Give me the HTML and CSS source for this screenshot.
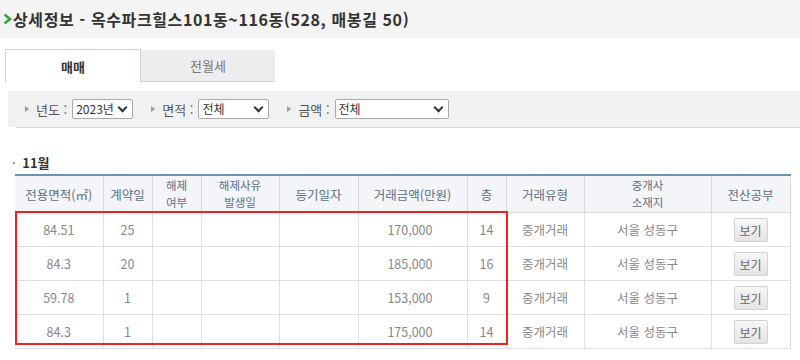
FILE: index.html
```html
<!doctype html>
<html lang="ko">
<head>
	<meta charset="UTF-8">
	<title>상세정보</title>
	<link rel="stylesheet" href="styles.css">
</head>
<body>
	<div class="title-bar">
		<svg class="arrow" width="9" height="12" viewBox="0 0 9 12"><path d="M1.5 1.5 L7 6 L1.5 10.5" fill="none" stroke="#2eaa3a" stroke-width="2.6"/></svg>
		<span class="title">상세정보 - 옥수파크힐스101동~116동(528, 매봉길 50)</span>
	</div>

	<div class="tabs">
		<div class="tab on">매매</div>
		<div class="tab">전월세</div>
	</div>

	<div class="filter">
		<span class="tri"></span><span class="lbl">년도 :</span>
		<span class="sel w60">2023년<i class="chev"></i></span>
		<span class="tri"></span><span class="lbl">면적 :</span>
		<span class="sel w71">전체<i class="chev"></i></span>
		<span class="tri"></span><span class="lbl">금액 :</span>
		<span class="sel w114">전체<i class="chev"></i></span>
	</div>

	<div class="month">· <b>11월</b></div>

	<div class="grid-wrap">
		<table class="grid">
			<colgroup>
				<col style="width:88px"><col style="width:49px"><col style="width:49px"><col style="width:78px"><col style="width:79px">
				<col style="width:109px"><col style="width:39px"><col style="width:78px"><col style="width:127px"><col style="width:79px">
			</colgroup>
			<thead>
				<tr>
					<th>전용면적(㎡)</th><th>계약일</th><th class="two">해제<br>여부</th><th class="two">해제사유<br>발생일</th><th>등기일자</th>
					<th>거래금액(만원)</th><th>층</th><th>거래유형</th><th class="two">중개사<br>소재지</th><th>전산공부</th>
				</tr>
			</thead>
			<tbody>
				<tr><td>84.51</td><td>25</td><td></td><td></td><td></td><td class="amt">170,000</td><td>14</td><td>중개거래</td><td>서울 성동구</td><td><span class="btn">보기</span></td></tr>
				<tr><td>84.3</td><td>20</td><td></td><td></td><td></td><td class="amt">185,000</td><td>16</td><td>중개거래</td><td>서울 성동구</td><td><span class="btn">보기</span></td></tr>
				<tr><td>59.78</td><td>1</td><td></td><td></td><td></td><td class="amt">153,000</td><td>9</td><td>중개거래</td><td>서울 성동구</td><td><span class="btn">보기</span></td></tr>
				<tr><td>84.3</td><td>1</td><td></td><td></td><td></td><td class="amt">175,000</td><td>14</td><td>중개거래</td><td>서울 성동구</td><td><span class="btn">보기</span></td></tr>
			</tbody>
		</table>
		<div class="mark"></div>
	</div>
</body>
</html>
```

FILE: styles.css
```css
html{
	height: 100%;
}
body{
	margin: 0;
	background: #fff;
	font-family: "Noto Sans CJK KR", "Noto Sans", sans-serif;
	color: #333;
}
.title-bar{
	height: 38px;
	background: #f4f4f4;
	display: flex;
	align-items: center;
	padding-left: 3px;
}
.arrow{
	margin-right: 1px;
}
.title{
	font-size: 16px;
	font-weight: bold;
	color: #333;
	letter-spacing: 0.6px;
}
.tabs{
	display: flex;
	margin: 11px 0 0 5px;
	width: 270px;
	height: 33px;
}
.tab{
	flex: 1;
	display: flex;
	align-items: center;
	justify-content: center;
	font-size: 13px;
	color: #777;
	background: #ededed;
	border-bottom: 1px solid #c3dcc3;
	box-sizing: border-box;
	margin-top: 1px;
}
.tab.on{
	background: #fff;
	color: #333;
	font-weight: bold;
	border: 1px solid #c3dcc3;
	border-bottom: none;
	margin-top: 0;
}
.filter{
	margin: 9px 0 0 8px;
	height: 36px;
	background: #f1f1f1;
	display: flex;
	align-items: center;
	padding-left: 17px;
	font-size: 13px;
	color: #555;
	box-shadow: 7px 2px 0 -1px #d8d8d8;
}
.tri{
	width: 0;
	height: 0;
	border-left: 4px solid #999;
	border-top: 3.5px solid transparent;
	border-bottom: 3.5px solid transparent;
	margin-right: 7px;
}
.lbl{
	margin-right: 5px;
}
.sel{
	position: relative;
	height: 20px;
	box-sizing: border-box;
	border: 1px solid #aaa;
	border-radius: 2px;
	background: #fff;
	font-size: 12px;
	color: #333;
	padding-left: 3px;
	line-height: 18px;
	margin-right: 18px;
}
.w60{ width: 61px; }
.w71{ width: 71px; }
.w114{ width: 114px; }
.chev{
	position: absolute;
	right: 6px;
	top: 4px;
	width: 5px;
	height: 5px;
	border-right: 2px solid #333;
	border-bottom: 2px solid #333;
	transform: rotate(45deg);
}
.month{
	margin: 26px 0 0 12px;
	height: 21px;
	font-size: 13px;
	color: #333;
}
.month b{
	margin-left: 3px;
}
.grid-wrap{
	position: relative;
	margin: 0 0 0 15px;
	width: 775px;
}
.grid{
	width: 775px;
	border-collapse: collapse;
	table-layout: fixed;
	border-top: 2px solid #6b93b5;
	box-shadow: 0 2px 0 #ddd;
}
.grid th{
	height: 36px;
	padding: 0;
	background: #f3f5f8;
	color: #5c6f86;
	font-size: 12.5px;
	font-weight: normal;
	line-height: 15px;
	border: 1px solid #d9d9d9;
	border-top: none;
}
.grid th.two{
	font-size: 11.5px;
	line-height: 17px;
}
.grid td{
	height: 33px;
	padding: 0;
	text-align: center;
	font-size: 12.5px;
	color: #888;
	border: 1px solid #e0e0e0;
}
.grid td.amt{
	text-align: right;
	padding-right: 34px;
}
.grid tr > :first-child{
	border-left: none;
}
.grid tr > :last-child{
	border-right: 1px solid #d9d9d9;
}
.btn{
	display: inline-block;
	width: 34px;
	height: 24px;
	line-height: 23px;
	box-sizing: border-box;
	border: 1px solid #d2d2d2;
	border-radius: 2px;
	background: linear-gradient(#f7f7f7, #e4e4e4);
	color: #666;
	font-size: 12px;
}
.mark{
	position: absolute;
	left: 0;
	top: 37px;
	width: 493px;
	height: 134px;
	box-sizing: border-box;
	border: 2px solid #ee2222;
	pointer-events: none;
}
```
